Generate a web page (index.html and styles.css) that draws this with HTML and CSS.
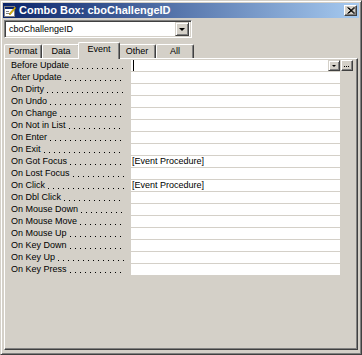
FILE: index.html
```html
<!DOCTYPE html>
<html lang="en">
<head>
  <meta charset="UTF-8" />
  <title>Combo Box: cboChallengeID</title>
  <link rel="stylesheet" href="styles.css">
</head>
<body>

  <div class="window">
    <div class="titlebar">
      <svg class="app-icon" width="12" height="12" viewBox="0 0 12 12">
        <rect x="0.5" y="1.5" width="10" height="10" fill="#fff" stroke="#808080" />
        <rect x="1" y="2" width="9" height="2" fill="#0a246a" />
        <rect x="2" y="6" width="3" height="1" fill="#808080" />
        <rect x="2" y="8" width="4" height="1" fill="#808080" />
        <path d="M5 9 L11 2 L12 3 L6 10 Z" fill="#e8c000" stroke="#806000" stroke-width="0.5" />
      </svg>
      <span class="title">Combo Box: cboChallengeID</span>
      <div class="close-btn">
        <svg width="8" height="7" viewBox="0 0 8 7">
          <path d="M0.5 0.5 L7 6.5 M1.5 0.5 L8 6.5 M7 0.5 L0.5 6.5 M8 0.5 L1.5 6.5" stroke="#000" stroke-width="1" />
        </svg>
      </div>
    </div>

    <div class="combo">
      <span class="combo-text">cboChallengeID</span>
      <span class="combo-btn"><span class="arrow"></span></span>
    </div>

    <div class="tabs">
      <div class="tab">Format</div>
      <div class="tab">Data</div>
      <div class="tab active">Event</div>
      <div class="tab">Other</div>
      <div class="tab">All</div>
    </div>

    <div class="panel">
      <div class="props">
        <div class="prop">
          <div class="prop-label"><span>Before Update</span><span class="leader"></span></div>
          <div class="prop-value first">
            <span class="caret"></span>
            <span class="drop-btn"><span class="arrow small"></span></span>
          </div>
          <div class="build-btn">
            <svg width="10" height="9" viewBox="0 0 10 9">
              <rect x="2" y="5" width="1" height="1" fill="#000" />
              <rect x="4" y="5" width="1" height="1" fill="#000" />
              <rect x="6" y="5" width="1" height="1" fill="#000" />
            </svg>
          </div>
        </div>
        <div class="prop">
          <div class="prop-label"><span>After Update</span><span class="leader"></span></div>
          <div class="prop-value"></div>
        </div>
        <div class="prop">
          <div class="prop-label"><span>On Dirty</span><span class="leader"></span></div>
          <div class="prop-value"></div>
        </div>
        <div class="prop">
          <div class="prop-label"><span>On Undo</span><span class="leader"></span></div>
          <div class="prop-value"></div>
        </div>
        <div class="prop">
          <div class="prop-label"><span>On Change</span><span class="leader"></span></div>
          <div class="prop-value"></div>
        </div>
        <div class="prop">
          <div class="prop-label"><span>On Not in List</span><span class="leader"></span></div>
          <div class="prop-value"></div>
        </div>
        <div class="prop">
          <div class="prop-label"><span>On Enter</span><span class="leader"></span></div>
          <div class="prop-value"></div>
        </div>
        <div class="prop">
          <div class="prop-label"><span>On Exit</span><span class="leader"></span></div>
          <div class="prop-value"></div>
        </div>
        <div class="prop">
          <div class="prop-label"><span>On Got Focus</span><span class="leader"></span></div>
          <div class="prop-value">[Event Procedure]</div>
        </div>
        <div class="prop">
          <div class="prop-label"><span>On Lost Focus</span><span class="leader"></span></div>
          <div class="prop-value"></div>
        </div>
        <div class="prop">
          <div class="prop-label"><span>On Click</span><span class="leader"></span></div>
          <div class="prop-value">[Event Procedure]</div>
        </div>
        <div class="prop">
          <div class="prop-label"><span>On Dbl Click</span><span class="leader"></span></div>
          <div class="prop-value"></div>
        </div>
        <div class="prop">
          <div class="prop-label"><span>On Mouse Down</span><span class="leader"></span></div>
          <div class="prop-value"></div>
        </div>
        <div class="prop">
          <div class="prop-label"><span>On Mouse Move</span><span class="leader"></span></div>
          <div class="prop-value"></div>
        </div>
        <div class="prop">
          <div class="prop-label"><span>On Mouse Up</span><span class="leader"></span></div>
          <div class="prop-value"></div>
        </div>
        <div class="prop">
          <div class="prop-label"><span>On Key Down</span><span class="leader"></span></div>
          <div class="prop-value"></div>
        </div>
        <div class="prop">
          <div class="prop-label"><span>On Key Up</span><span class="leader"></span></div>
          <div class="prop-value"></div>
        </div>
        <div class="prop">
          <div class="prop-label"><span>On Key Press</span><span class="leader"></span></div>
          <div class="prop-value"></div>
        </div>
      </div>
    </div>
  </div>

</body>
</html>
```

FILE: styles.css
```css
* {
  box-sizing: border-box;
}

body {
  margin: 0;
  background: #d4d0c8;
  font-family: "Liberation Sans", Arial, sans-serif;
  font-size: 9px;
  color: #000;
}

.window {
  width: 362px;
  height: 355px;
  display: flex;
  flex-direction: column;
  padding: 2px;
  background: #d4d0c8;
  border: 1px solid;
  border-color: #d4d0c8 #404040 #404040 #d4d0c8;
  box-shadow: inset 1px 1px #fff, inset -1px -1px #808080;
}

/* title bar */
.titlebar {
  height: 15px;
  display: flex;
  align-items: center;
  padding-left: 1px;
  background: linear-gradient(to right, #0a246a, #a6caf0);
  color: #fff;
}

.app-icon {
  flex: none;
  margin-right: 3px;
}

.title {
  flex: 1;
  font-size: 11px;
  font-weight: bold;
  line-height: 13px;
  padding-bottom: 1px;
}

.close-btn {
  width: 13px;
  height: 11px;
  margin-right: 2px;
  display: flex;
  align-items: center;
  justify-content: center;
  background: #d4d0c8;
  border: 1px solid;
  border-color: #fff #404040 #404040 #fff;
  box-shadow: inset -1px -1px #808080;
}

/* object combo */
.combo {
  width: 188px;
  height: 18px;
  margin: 2px 0 0 1px;
  padding: 2px;
  display: flex;
  align-items: center;
  background: #fff;
  border: 1px solid;
  border-color: #808080 #fff #fff #808080;
  box-shadow: inset 1px 1px #404040, inset -1px -1px #d4d0c8;
}

.combo-text {
  flex: 1;
  padding-left: 2px;
  line-height: 14px;
}

.combo-btn,
.drop-btn {
  width: 14px;
  height: 14px;
  display: flex;
  align-items: center;
  justify-content: center;
  background: #d4d0c8;
  border: 1px solid;
  border-color: #d4d0c8 #404040 #404040 #d4d0c8;
  box-shadow: inset 1px 1px #fff, inset -1px -1px #808080;
}

.arrow {
  width: 0;
  height: 0;
  margin-top: 1px;
  border-left: 3px solid transparent;
  border-right: 3px solid transparent;
  border-top: 3px solid #000;
}

.arrow.small {
  margin-top: 0;
  border-left-width: 2px;
  border-right-width: 2px;
  border-top-width: 2px;
}

/* tabs */
.tabs {
  display: flex;
  align-items: flex-end;
  height: 17px;
  margin-top: 4px;
  padding-left: 1px;
  position: relative;
  z-index: 1;
}

.tab {
  width: 38px;
  height: 14px;
  margin-bottom: 1px;
  line-height: 13px;
  text-align: center;
  border: 1px solid;
  border-bottom: none;
  border-color: #fff #404040 #404040 #fff;
  border-radius: 2px 2px 0 0;
  box-shadow: inset -1px 0 #808080;
}

.tab.active {
  width: 42px;
  height: 17px;
  margin: 0 -2px;
  background: #d4d0c8;
  position: relative;
}

/* property sheet */
.panel {
  flex: 1;
  margin: -1px 1px 2px;
  padding-top: 1px;
  border: 1px solid;
  border-color: #fff #404040 #404040 #fff;
  box-shadow: inset -1px -1px #808080;
}

.props {
  display: flex;
  flex-direction: column;
  gap: 1px;
}

.prop {
  display: flex;
  height: 11px;
  line-height: 11px;
}

.prop-label {
  width: 126px;
  display: flex;
  padding: 0 7px 0 6px;
  white-space: nowrap;
}

.leader {
  flex: 1;
  margin-left: 3px;
  background-image: linear-gradient(to right, #000 1px, transparent 1px);
  background-size: 5px 1px;
  background-repeat: repeat-x;
  background-position: 0 8px;
}

.prop-value {
  width: 209px;
  padding-left: 1px;
  background: #fff;
  white-space: nowrap;
}

.prop-value.first {
  display: flex;
  justify-content: space-between;
  padding-left: 2px;
}

.caret {
  width: 1px;
  height: 11px;
  background: #000;
}

.drop-btn {
  width: 12px;
  height: 11px;
}

.build-btn {
  width: 12px;
  height: 11px;
  margin-left: 1px;
  background: #d4d0c8;
  border: 1px solid;
  border-color: #fff #404040 #404040 #fff;
  box-shadow: inset -1px -1px #808080;
}

.build-btn svg {
  display: block;
}
```
